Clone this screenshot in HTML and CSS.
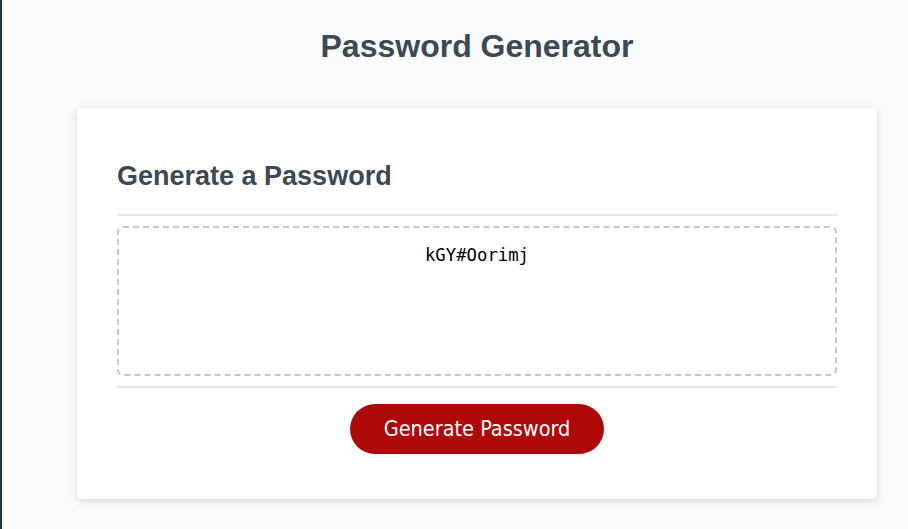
FILE: index.html
```html
<!DOCTYPE html>
<html lang="en">
<head>
<meta charset="utf-8">
<title>Password Generator</title>
<link rel="stylesheet" href="styles.css">
</head>
<body>
<div class="wrapper">
  <header class="page-header">
    <h1 class="page-title">Password Generator</h1>
  </header>
  <div class="card">
    <div class="card-header">
      <h2 class="card-title">Generate a Password</h2>
    </div>
    <div class="card-body">
      <textarea readonly class="password" aria-label="Generated Password">kGY#Oorimj</textarea>
    </div>
    <div class="card-footer">
      <button class="btn">Generate Password</button>
    </div>
  </div>
</div>
</body>
</html>
```

FILE: styles.css
```css
* { box-sizing: border-box; }
html, body { margin: 0; padding: 0; }
body {
  background: #f9fbfd;
  border-left: 2px solid #1f3449;
  min-height: 529px;
  font-family: "Liberation Sans", Arial, sans-serif;
  color: #3b4954;
}
.wrapper {
  padding: 28px 31px 0 75px;
}
.page-header {
  text-align: center;
}
.page-title {
  margin: 0 0 43px;
  font-size: 32px;
  line-height: 37px;
  font-weight: bold;
}
.card {
  background: #fff;
  border-radius: 5px;
  box-shadow: rgba(0, 0, 0, 0.15) 0 2px 8px 0;
  width: 800px;
  padding: 30px 40px 45px;
  font-size: 18px;
}
.card-title {
  margin: 0;
  padding: 23px 0 22px;
  font-size: 27px;
  line-height: 31px;
  font-weight: bold;
}
.card-header::after {
  content: "";
  display: block;
  height: 2px;
  background: #e7e9eb;
}
.password {
  display: block;
  width: 100%;
  height: 150px;
  margin: 10px 0;
  padding: 17px 10px 10px;
  border: 2px dashed #c0c7cf;
  border-radius: 6px;
  background: none;
  resize: none;
  text-align: center;
  font-family: "DejaVu Sans Mono", "Liberation Mono", monospace;
  font-size: 17.3px;
  line-height: 20px;
  color: #000;
  outline: none;
}
.card-footer {
  text-align: center;
}
.card-footer::before {
  content: "";
  display: block;
  height: 2px;
  background: #e7e9eb;
  margin-bottom: 16px;
}
.btn {
  display: inline-block;
  height: 50px;
  padding: 0 34px;
  border: none;
  border-radius: 25px;
  background: #af0808;
  color: #fff;
  font-family: "DejaVu Sans Condensed", "DejaVu Sans", sans-serif;
  font-size: 21.5px;
  line-height: 50px;
  cursor: pointer;
}
```
